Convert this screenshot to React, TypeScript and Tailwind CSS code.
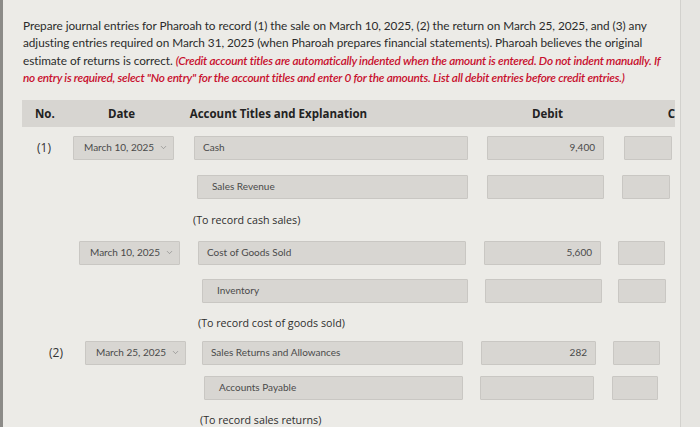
import { ChevronDown } from 'lucide-react'

type Row = {
  no?: string
  date?: string
  account: string
  indent?: boolean
  debit?: string
  shift: string
  dateCol?: string
  accW: string
  debGap: string
  debW: string
  crGap: string
  crW: string
}

const field = 'h-6 bg-[#d8d6d2] border border-[#c9c7c3] rounded-[1px] text-[10px] text-[#4a4a4a] flex items-center'

function EntryRow({ no, date, account, indent, debit, shift, dateCol = 'w-[121px]', accW, debGap, debW, crGap, crW }: Row) {
  return (
    <div className={`flex items-center h-6 ${shift}`}>
      <div className="w-[52px] text-[12px] text-[#333] pl-[16px]" style={{ fontFamily: '"Open Sans", sans-serif' }}>{no}</div>
      <div className={dateCol}>
        {date && (
          <div className={`${field} w-[101px] pl-[10px] pr-[5px] justify-between`}>
            <span>{date}</span>
            <ChevronDown size={9} strokeWidth={1.5} className="text-[#777]" />
          </div>
        )}
      </div>
      <div className={`${field} ${accW} ${indent ? 'pl-[14px]' : 'pl-[8px]'}`}>{account}</div>
      <div className={`${field} ${debW} ${debGap} justify-end pr-[8px]`}>{debit}</div>
      <div className={`${field} ${crW} ${crGap}`} />
    </div>
  )
}

function Note({ text, shift }: { text: string; shift: string }) {
  return (
    <div className={`h-[16px] leading-[16px] text-[10.7px] text-[#2e2e2e] ${shift}`} style={{ fontFamily: '"Open Sans", sans-serif' }}>
      {text}
    </div>
  )
}

export default function App() {
  return (
    <div className="w-[700px] h-[427px] overflow-hidden bg-[#8c8b88] flex flex-col" style={{ fontFamily: 'Lato, sans-serif' }}>
      <div className="h-[4px] bg-[#a9a8a5]" />
      <div className="flex-1 flex ml-[3px] bg-[#e6e5e1]">
        <div className="w-[678px] border-r border-[#d2d1cd] bg-[#ecebe7] flex flex-col">
          <div className="pl-[20px] pt-[17px] text-[11.8px] leading-[17.4px] text-[#2b2b2b] tracking-[-0.05px] whitespace-nowrap">
            <p>
              Prepare journal entries for Pharoah to record (1) the sale on March 10, 2025, (2) the return on March 25, 2025, and (3) any
              <br />
              adjusting entries required on March 31, 2025 (when Pharoah prepares financial statements). Pharoah believes the original
              <br />
              estimate of returns is correct.{' '}
              <span className="text-[#c8102e] italic font-semibold tracking-[-0.25px]">
                (Credit account titles are automatically indented when the amount is entered. Do not indent manually. If
                <br />
                no entry is required, select "No entry" for the account titles and enter 0 for the amounts. List all debit entries before credit entries.)
              </span>
            </p>
          </div>

          <div
            className="mt-[13px] ml-[19px] w-[653px] h-[27px] bg-[#d7d5d1] flex items-center text-[11.5px] font-bold text-[#222]"
            style={{ fontFamily: '"Open Sans", sans-serif' }}
          >
            <div className="w-[70px] pl-[13px]">No.</div>
            <div className="w-[98px] pl-[16px]">Date</div>
            <div className="w-[343px]">Account Titles and Explanation</div>
            <div className="w-[136px]">Debit</div>
            <div>C</div>
          </div>

          <div className="flex flex-col mt-[9px]">
            <EntryRow no="(1)" date="March 10, 2025" account="Cash" debit="9,400" shift="ml-[18px]"
              accW="w-[274px]" debGap="ml-[19px]" debW="w-[117px]" crGap="ml-[20px]" crW="w-[48px]" />
            <div className="h-[15px]" />
            <EntryRow account="Sales Revenue" indent shift="ml-[21px]"
              accW="w-[271px]" debGap="ml-[19px]" debW="w-[117px]" crGap="ml-[18px]" crW="w-[48px]" />
            <div className="h-[13px]" />
            <Note text="(To record cash sales)" shift="ml-[190px]" />
            <div className="h-[13px]" />
            <EntryRow date="March 10, 2025" account="Cost of Goods Sold" debit="5,600" shift="ml-[24px]" dateCol="w-[119px]"
              accW="w-[268px]" debGap="ml-[18px]" debW="w-[117px]" crGap="ml-[17px]" crW="w-[47px]" />
            <div className="h-[14px]" />
            <EntryRow account="Inventory" indent shift="ml-[26px]"
              accW="w-[266px]" debGap="ml-[17px]" debW="w-[117px]" crGap="ml-[16px]" crW="w-[48px]" />
            <div className="h-[12px]" />
            <Note text="(To record cost of goods sold)" shift="ml-[195px]" />
            <div className="h-[10px]" />
            <EntryRow no="(2)" date="March 25, 2025" account="Sales Returns and Allowances" debit="282" shift="ml-[30px]" dateCol="w-[117px]"
              accW="w-[261px]" debGap="ml-[18px]" debW="w-[115px]" crGap="ml-[17px]" crW="w-[47px]" />
            <div className="h-[11px]" />
            <EntryRow account="Accounts Payable" indent shift="ml-[28px]"
              accW="w-[259px]" debGap="ml-[17px]" debW="w-[114px]" crGap="ml-[18px]" crW="w-[46px]" />
            <div className="h-[12px]" />
            <Note text="(To record sales returns)" shift="ml-[197px]" />
          </div>
        </div>
      </div>
    </div>
  )
}
